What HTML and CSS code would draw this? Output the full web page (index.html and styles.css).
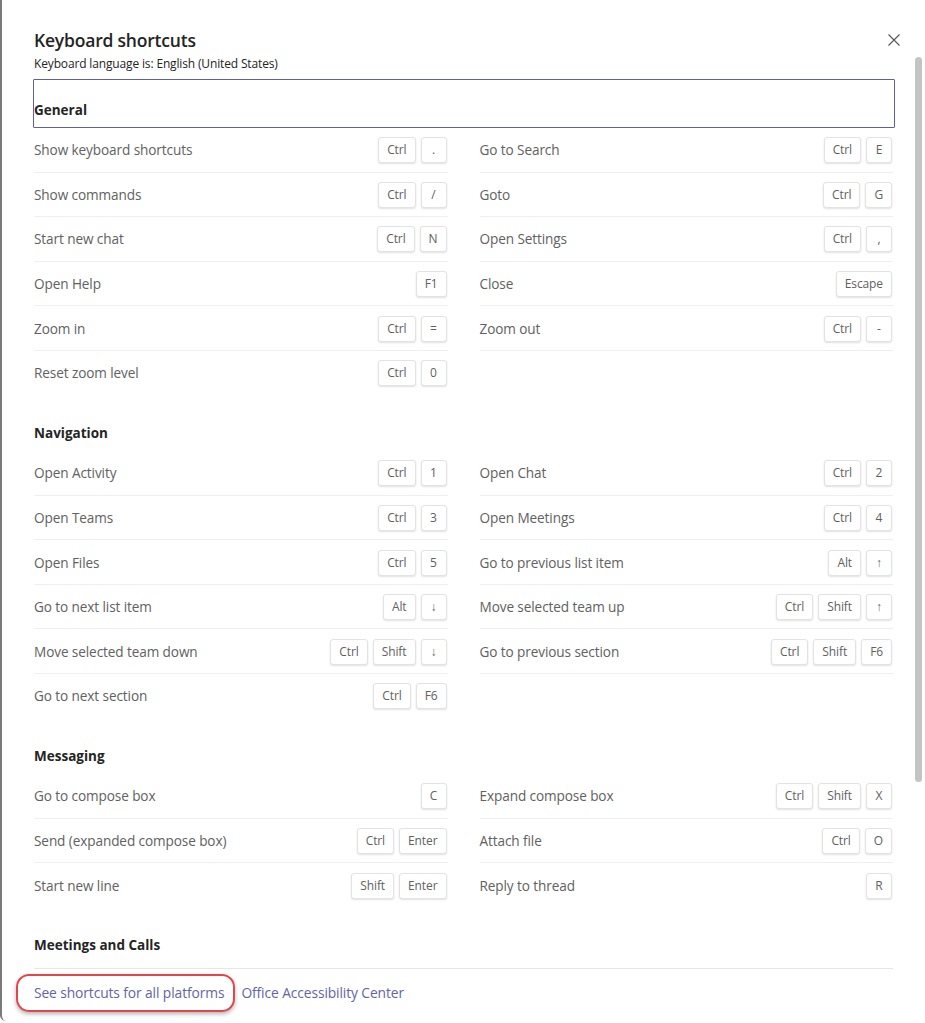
FILE: index.html
```html
<!DOCTYPE html>
<html lang="en">
<head>
    <meta charset="UTF-8">
    <meta name="viewport" content="width=device-width, initial-scale=1.0">
    <title>Keyboard shortcuts</title>
    <link rel="stylesheet" href="styles.css">
</head>
<body>
    <div class="dialog">
        <div class="dialog-head">
            <h1 class="title">Keyboard shortcuts</h1>
            <p class="subtitle">Keyboard language is: English (United States)</p>
        </div>
        <button class="close" aria-label="Close">
            <svg width="12" height="12" viewBox="0 0 12 12"><path d="M0.5 0.5 L11.5 11.5 M11.5 0.5 L0.5 11.5" stroke="#555" stroke-width="1.1" fill="none"/></svg>
        </button>

        <div class="dialog-body">
            <section class="group">
                <h2 class="group-title focused">General</h2>
                <div class="grid">
                    <div class="row"><span>Show keyboard shortcuts</span><span class="keys"><kbd>Ctrl</kbd><kbd>.</kbd></span></div>
                    <div class="row"><span>Go to Search</span><span class="keys"><kbd>Ctrl</kbd><kbd>E</kbd></span></div>
                    <div class="row"><span>Show commands</span><span class="keys"><kbd>Ctrl</kbd><kbd>/</kbd></span></div>
                    <div class="row"><span>Goto</span><span class="keys"><kbd>Ctrl</kbd><kbd>G</kbd></span></div>
                    <div class="row"><span>Start new chat</span><span class="keys"><kbd>Ctrl</kbd><kbd>N</kbd></span></div>
                    <div class="row"><span>Open Settings</span><span class="keys"><kbd>Ctrl</kbd><kbd>,</kbd></span></div>
                    <div class="row"><span>Open Help</span><span class="keys"><kbd>F1</kbd></span></div>
                    <div class="row"><span>Close</span><span class="keys"><kbd>Escape</kbd></span></div>
                    <div class="row"><span>Zoom in</span><span class="keys"><kbd>Ctrl</kbd><kbd>=</kbd></span></div>
                    <div class="row"><span>Zoom out</span><span class="keys"><kbd>Ctrl</kbd><kbd>-</kbd></span></div>
                    <div class="row"><span>Reset zoom level</span><span class="keys"><kbd>Ctrl</kbd><kbd>0</kbd></span></div>
                </div>
            </section>

            <section class="group">
                <h2 class="group-title">Navigation</h2>
                <div class="grid">
                    <div class="row"><span>Open Activity</span><span class="keys"><kbd>Ctrl</kbd><kbd>1</kbd></span></div>
                    <div class="row"><span>Open Chat</span><span class="keys"><kbd>Ctrl</kbd><kbd>2</kbd></span></div>
                    <div class="row"><span>Open Teams</span><span class="keys"><kbd>Ctrl</kbd><kbd>3</kbd></span></div>
                    <div class="row"><span>Open Meetings</span><span class="keys"><kbd>Ctrl</kbd><kbd>4</kbd></span></div>
                    <div class="row"><span>Open Files</span><span class="keys"><kbd>Ctrl</kbd><kbd>5</kbd></span></div>
                    <div class="row"><span>Go to previous list item</span><span class="keys"><kbd>Alt</kbd><kbd>&uarr;</kbd></span></div>
                    <div class="row"><span>Go to next list item</span><span class="keys"><kbd>Alt</kbd><kbd>&darr;</kbd></span></div>
                    <div class="row"><span>Move selected team up</span><span class="keys"><kbd>Ctrl</kbd><kbd>Shift</kbd><kbd>&uarr;</kbd></span></div>
                    <div class="row"><span>Move selected team down</span><span class="keys"><kbd>Ctrl</kbd><kbd>Shift</kbd><kbd>&darr;</kbd></span></div>
                    <div class="row"><span>Go to previous section</span><span class="keys"><kbd>Ctrl</kbd><kbd>Shift</kbd><kbd>F6</kbd></span></div>
                    <div class="row"><span>Go to next section</span><span class="keys"><kbd>Ctrl</kbd><kbd>F6</kbd></span></div>
                </div>
            </section>

            <section class="group">
                <h2 class="group-title">Messaging</h2>
                <div class="grid">
                    <div class="row"><span>Go to compose box</span><span class="keys"><kbd>C</kbd></span></div>
                    <div class="row"><span>Expand compose box</span><span class="keys"><kbd>Ctrl</kbd><kbd>Shift</kbd><kbd>X</kbd></span></div>
                    <div class="row"><span>Send (expanded compose box)</span><span class="keys"><kbd>Ctrl</kbd><kbd>Enter</kbd></span></div>
                    <div class="row"><span>Attach file</span><span class="keys"><kbd>Ctrl</kbd><kbd>O</kbd></span></div>
                    <div class="row"><span>Start new line</span><span class="keys"><kbd>Shift</kbd><kbd>Enter</kbd></span></div>
                    <div class="row"><span>Reply to thread</span><span class="keys"><kbd>R</kbd></span></div>
                </div>
            </section>

            <section class="group">
                <h2 class="group-title">Meetings and Calls</h2>
            </section>
        </div>

        <div class="dialog-foot">
            <a href="#" class="link marked">See shortcuts for all platforms</a>
            <a href="#" class="link">Office Accessibility Center</a>
        </div>

        <div class="scroll-thumb"></div>
    </div>
</body>
</html>
```

FILE: styles.css
```css
* {
    box-sizing: border-box;
}
body {
    margin: 0;
    background-color: #ffffff;
    font-family: 'Segoe UI', 'Open Sans', sans-serif;
    color: #242424;
}
.dialog {
    position: relative;
    width: 925px;
    height: 1021px;
    padding: 28px 32px 0 32px;
    border-left: 2px solid #7a7a7a;
    border-bottom-left-radius: 6px;
    background-color: #ffffff;
}
.title {
    margin: 0;
    font-size: 17.5px;
    font-weight: 600;
    line-height: 24px;
    letter-spacing: -0.2px;
}
.subtitle {
    margin: 4px 0 0 0;
    font-size: 12px;
    line-height: 16px;
    letter-spacing: -0.15px;
}
.close {
    position: absolute;
    top: 34px;
    right: 25px;
    width: 12px;
    height: 12px;
    padding: 0;
    border: none;
    background: none;
    display: flex;
}
.dialog-body {
    margin: 7px -3px 0 -3px;
    padding: 0 3px;
    height: 889px;
    overflow: hidden;
}
.group + .group {
    margin-top: 6.5px;
}
.group-title {
    margin: 0;
    height: 49px;
    padding-top: 21px;
    font-size: 13.5px;
    font-weight: 700;
    line-height: 20px;
}
.group-title.focused {
    margin: 0 -2px 0 -1px;
    padding-top: 19.5px;
    border: 1.5px solid #5d60a8;
    border-radius: 1px;
}
.grid {
    display: grid;
    grid-template-columns: 1fr 1fr;
    column-gap: 32px;
}
.row {
    display: flex;
    align-items: center;
    justify-content: space-between;
    height: 44.6px;
    border-bottom: 1px solid #efefef;
    font-size: 13.6px;
    color: #616161;
    letter-spacing: -0.1px;
}
.row:last-child, .row:nth-last-child(2):nth-child(odd) {
    border-bottom-color: transparent;
}
.keys {
    display: flex;
    gap: 5px;
    padding: 1px 1px 0 0;
}
kbd {
    display: inline-block;
    min-width: 26px;
    height: 26px;
    padding: 0 8px;
    border: 1px solid #e3e3e3;
    border-radius: 3px;
    box-shadow: 0 1px 2px rgba(0, 0, 0, 0.12);
    font-family: 'Segoe UI', 'Open Sans', sans-serif;
    font-size: 12px;
    line-height: 24px;
    text-align: center;
    color: #616161;
    background-color: #ffffff;
}
.dialog-foot {
    display: flex;
    gap: 17px;
    padding-top: 14px;
    border-top: 1px solid #e6e6e6;
}
.link {
    position: relative;
    font-size: 13.8px;
    line-height: 20px;
    color: #6264a7;
    text-decoration: none;
    letter-spacing: -0.1px;
}
.link.marked::after {
    content: "";
    position: absolute;
    top: -9px;
    left: -18px;
    right: -11px;
    bottom: -9px;
    border: 2px solid #e0464c;
    border-radius: 13px;
    box-shadow: 0 2px 4px rgba(0, 0, 0, 0.3);
}
.scroll-thumb {
    position: absolute;
    top: 57px;
    left: 913px;
    width: 7px;
    height: 725px;
    border-radius: 4px;
    background-color: #c4c4c4;
}
```
